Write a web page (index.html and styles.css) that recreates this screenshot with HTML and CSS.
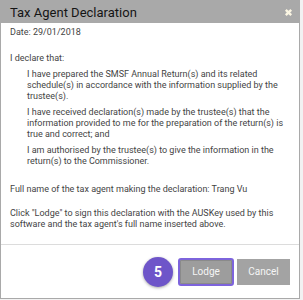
FILE: index.html
```html
<!DOCTYPE html>
<html lang="en">
<head>
    <meta charset="UTF-8">
    <title>Tax Agent Declaration</title>
    <link rel="stylesheet" href="styles.css">
</head>
<body>
    <div class="dialog">
        <div class="dialog-header">
            <h1>Tax Agent Declaration</h1>
            <button type="button" class="close-button">
                <svg width="9" height="9" viewBox="0 0 10 10">
                    <path d="M2 2L8 8M8 2L2 8" stroke="currentColor" stroke-width="2.6"></path>
                </svg>
            </button>
        </div>

        <div class="dialog-body">
            <p class="date">Date: 29/01/2018</p>
            <p class="intro">I declare that:</p>
            <ul class="statements">
                <li>I have prepared the SMSF Annual Return(s) and its related schedule(s) in accordance with the information supplied by the trustee(s).</li>
                <li>I have received declaration(s) made by the trustee(s) that the information provided to me for the preparation of the return(s) is true and correct; and</li>
                <li>I am authorised by the trustee(s) to give the information in the return(s) to the Commissioner.</li>
            </ul>
            <p class="agent-name">Full name of the tax agent making the declaration: Trang Vu</p>
            <p class="instructions">Click "Lodge" to sign this declaration with the AUSKey used by this software and the tax agent's full name inserted above.</p>
        </div>

        <div class="dialog-footer">
            <span class="step-badge">5</span>
            <button type="button" class="btn btn-lodge">Lodge</button>
            <button type="button" class="btn btn-cancel">Cancel</button>
        </div>
    </div>
</body>
</html>
```

FILE: styles.css
```css
* {
    margin: 0;
    padding: 0;
    box-sizing: border-box;
    font-family: Roboto, 'Liberation Sans', sans-serif;
}

body {
    background-color: #f2f2f2;
    width: 303px;
    height: 300px;
}

.dialog {
    width: 300px;
    height: 299px;
    background-color: white;
    border: 1px solid #a9a9a9;
    display: flex;
    flex-direction: column;
}

.dialog-header {
    height: 22px;
    background-color: #a9a9a9;
    display: flex;
    align-items: center;
    justify-content: space-between;
    padding: 0 6px 0 9px;
}

h1 {
    font-size: 13px;
    font-weight: 400;
    color: #151515;
}

.close-button {
    background: none;
    border: none;
    color: #fbf6e3;
    display: flex;
    align-items: center;
    padding: 0;
}

.dialog-body {
    padding: 4px 8px 0 9px;
    font-size: 9px;
    line-height: 11px;
    color: #444;
    flex: 1;
    border-bottom: 1px solid #dcdcdc;
}

.intro {
    margin-top: 15px;
}

.statements {
    list-style: none;
    padding-left: 17px;
    margin-top: 5px;
    display: flex;
    flex-direction: column;
    gap: 5px;
}

.agent-name {
    margin-top: 17px;
}

.instructions {
    margin-top: 13px;
}

.dialog-footer {
    height: 53px;
    display: flex;
    align-items: center;
    justify-content: flex-end;
    padding: 0 9px 0 0;
    gap: 3px;
}

.step-badge {
    width: 30px;
    height: 30px;
    border-radius: 50%;
    background-color: #6e55c9;
    color: white;
    font-size: 14px;
    font-weight: 700;
    display: flex;
    align-items: center;
    justify-content: center;
    box-shadow: 0 1px 3px rgba(0, 0, 0, 0.35);
    margin-right: 2px;
}

.btn {
    height: 26px;
    border: none;
    color: #f5f5f5;
    font-size: 10px;
    background-color: #a3a3a3;
}

.btn-lodge {
    width: 56px;
    height: 28px;
    background-color: #9d9d9d;
    border: 2px solid #7d64dc;
    border-radius: 3px;
    box-shadow: inset 0 0 0 1px #8a8a8a;
}

.btn-cancel {
    width: 53px;
}
```
